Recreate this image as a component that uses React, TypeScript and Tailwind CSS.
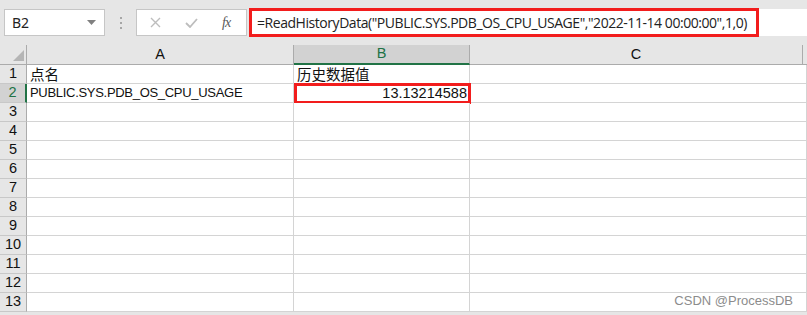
import React from 'react';

const rows = Array.from({ length: 13 }, (_, i) => i + 1);

const App: React.FC = () => {
  return (
    <div className="w-[807px] h-[315px] overflow-hidden bg-[#e6e6e6] font-['Liberation_Sans','Noto_Sans_CJK_SC',sans-serif] relative">
      {/* Barra de fórmulas */}
      <div className="h-[45px] flex items-start pt-[9px] pl-[4px]">
        <div className="w-[101px] h-[27px] bg-white border border-[#c6c6c6] flex items-center justify-between pl-[7px] pr-[8px] text-[14px] text-[#222] font-['Noto_Sans',sans-serif]">
          <span>B2</span>
          <svg width="9" height="5" viewBox="0 0 9 5"><path d="M0 0h9L4.5 5z" fill="#808080" /></svg>
        </div>
        <div className="w-[31px] h-[27px] flex flex-col items-center justify-center gap-[3px]">
          <span className="w-[2px] h-[2px] bg-[#a6a6a6]" />
          <span className="w-[2px] h-[2px] bg-[#a6a6a6]" />
          <span className="w-[2px] h-[2px] bg-[#a6a6a6]" />
        </div>
        <div className="w-[111px] h-[27px] bg-white border border-[#c6c6c6] flex items-center pl-[13px] gap-[24px]">
          <svg width="11" height="11" viewBox="0 0 11 11"><path d="M1 1l9 9M10 1l-9 9" stroke="#bdbdbd" strokeWidth="1.4" /></svg>
          <svg width="13" height="10" viewBox="0 0 13 10"><path d="M1 5l4 4 7-8" stroke="#bdbdbd" strokeWidth="1.8" fill="none" /></svg>
          <span className="text-[14px] italic text-[#595959] font-['Liberation_Serif',serif] tracking-[-1px]">fx</span>
        </div>
        <div className="ml-[2px] flex-1 h-[27px] bg-white flex items-center">
          <div className="w-[510px] h-[29px] -mt-px border-[3px] border-[#f21d1d] flex items-center pl-[5px] text-[14px] text-[#222] font-['Open_Sans',sans-serif] whitespace-nowrap tracking-[-0.45px]">
            =ReadHistoryData("PUBLIC.SYS.PDB_OS_CPU_USAGE","2022-11-14 00:00:00",1,0)
          </div>
        </div>
      </div>

      {/* Hoja */}
      <div className="text-[14.5px] text-[#111]">
        <div className="h-[20px] flex bg-[#e6e6e6] border-b border-[#ababab]">
          <div className="w-[27px] h-[20px] border-r border-[#ababab] relative">
            <svg className="absolute left-[13px] top-[5px]" width="11" height="11" viewBox="0 0 11 11"><path d="M11 0v11H0z" fill="#b5b5b5" /></svg>
          </div>
          <div className="w-[267px] border-r border-[#ababab] flex items-center justify-center">A</div>
          <div className="w-[176px] bg-[#d2d2d2] border-r border-[#ababab] border-b-2 border-b-[#217346] -mb-px flex items-center justify-center text-[#217346]">B</div>
          <div className="w-[333px] border-r border-[#ababab] flex items-center justify-center">C</div>
        </div>
        {rows.map((r) => (
          <div key={r} className="h-[19px] flex">
            <div className={`w-[27px] border-b border-[#c8c8c8] flex items-center justify-center ${r === 2 ? 'bg-[#d2d2d2] text-[#217346] border-r-2 border-r-[#217346]' : 'bg-[#e6e6e6] border-r border-r-[#ababab]'}`}>{r}</div>
            <div className="w-[267px] bg-white border-r border-b border-[#d4d4d4] flex items-center pl-[3px] whitespace-nowrap">
              {r === 1 && <span className="font-['Noto_Sans_CJK_SC',sans-serif]">点名</span>}
              {r === 2 && <span className="text-[13px] tracking-[-0.3px]">PUBLIC.SYS.PDB_OS_CPU_USAGE</span>}
            </div>
            <div className="w-[176px] bg-white border-r border-b border-[#d4d4d4] flex items-center whitespace-nowrap relative">
              {r === 1 && <span className="pl-[3px] font-['Noto_Sans_CJK_SC',sans-serif]">历史数据值</span>}
              {r === 2 && (
                <div className="absolute left-0 top-[-1px] w-[177px] h-[21px] border-[3px] border-[#f21d1d] flex items-center justify-end pr-[1px]">13.13214588</div>
              )}
            </div>
            <div className="flex-1 bg-white border-r border-b border-[#d4d4d4]" />
          </div>
        ))}
      </div>

      <span className="absolute right-[14px] top-[291px] text-[13px] text-[#8c8c8c] font-['Liberation_Sans',sans-serif]">CSDN @ProcessDB</span>
    </div>
  );
};

export default App;
